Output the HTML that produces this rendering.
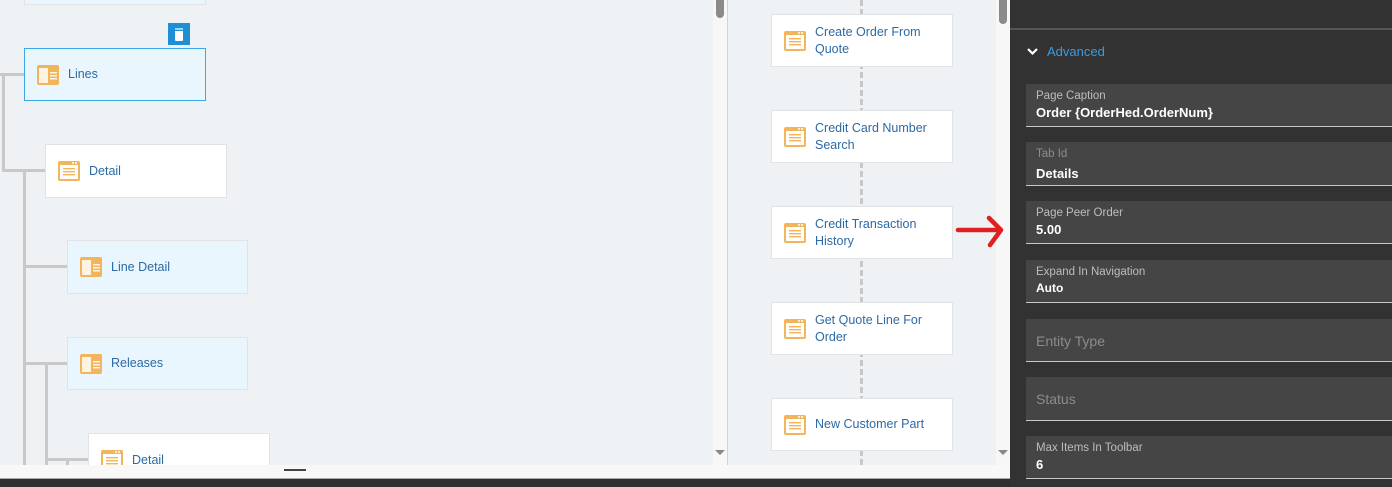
<!DOCTYPE html>
<html><head><style>
*{margin:0;padding:0;box-sizing:border-box}
body{width:1392px;height:487px;overflow:hidden;position:relative;background:#eef2f5;font-family:"Liberation Sans",sans-serif}
.a{position:absolute}
.card{position:absolute;background:#fff;border:1px solid #e1e3e6;display:flex;align-items:center;color:#2c6aa5;font-size:12.5px;line-height:17px}
.card.sel{background:#eaf6fd}
.card svg{position:absolute;left:12px;top:50%;margin-top:-10px}
.card span{position:absolute;left:43px;right:8px}
.ln{position:absolute;background:#c9c9c9}
.fld{position:absolute;left:1026px;width:366px;height:43px;background:#454545;border-bottom:1px solid #c8c8c8}
.lb{position:absolute;left:10px;top:6px;font-size:11.5px;color:#bdbdbd}
.vl{position:absolute;left:10px;top:21px;font-size:13px;color:#fff;font-weight:bold}
.ph{position:absolute;left:10px;top:14px;font-size:14px;color:#8c8c8c}
</style></head><body>
<svg width="0" height="0" style="position:absolute"><defs>
<symbol id="i1" viewBox="0 0 22 20"><rect x="0" y="0" width="22" height="20" rx="2" fill="#f3b55c"/><rect x="2" y="3" width="9" height="15" fill="#fdf3e3"/><rect x="13" y="7" width="7" height="1.5" fill="#fdf3e3"/><rect x="13" y="10" width="7" height="1.5" fill="#fdf3e3"/><rect x="13" y="13" width="7" height="1.5" fill="#fdf3e3"/></symbol>
<symbol id="i2" viewBox="0 0 22 20"><rect x="0" y="0" width="22" height="20" rx="2" fill="#f3b55c"/><rect x="2" y="4" width="18" height="14" fill="#fff"/><rect x="14" y="1.2" width="2" height="1.5" fill="#fff"/><rect x="17" y="1.2" width="2" height="1.5" fill="#fff"/><rect x="5" y="7" width="12" height="1.4" fill="#f3b55c"/><rect x="5" y="10" width="12" height="1.4" fill="#f3b55c"/><rect x="5" y="13" width="12" height="1.4" fill="#f3b55c"/></symbol>
</defs></svg>

<div class="ln" style="left:0;top:73px;width:24px;height:3px"></div>
<div class="ln" style="left:2px;top:73px;width:3px;height:99px"></div>
<div class="ln" style="left:2px;top:169px;width:43px;height:3px"></div>
<div class="ln" style="left:23px;top:169px;width:3px;height:300px"></div>
<div class="ln" style="left:23px;top:265px;width:44px;height:3px"></div>
<div class="ln" style="left:23px;top:362px;width:44px;height:3px"></div>
<div class="ln" style="left:45px;top:362px;width:3px;height:110px"></div>
<div class="ln" style="left:45px;top:458px;width:43px;height:3px"></div>
<div class="ln" style="left:66px;top:458px;width:3px;height:10px"></div>

<div class="card sel" style="left:24px;top:-10px;width:182px;height:15px"></div>
<div class="a" style="left:168px;top:23px;width:22px;height:22px;background:#1e8fd5"><div class="a" style="left:7px;top:5px;width:8px;height:2px;background:#9fd3f5"></div><div class="a" style="left:7px;top:8px;width:8px;height:10px;background:#fff;border-radius:0 0 1px 1px"></div></div>
<div class="card sel" style="left:24px;top:48px;width:182px;height:53px;border-color:#3aa9e8"><svg width="22" height="20"><use href="#i1"/></svg><span>Lines</span></div>
<div class="card" style="left:45px;top:144px;width:182px;height:54px"><svg width="22" height="20"><use href="#i2"/></svg><span>Detail</span></div>
<div class="card sel" style="left:67px;top:240px;width:181px;height:54px"><svg width="22" height="20"><use href="#i1"/></svg><span>Line Detail</span></div>
<div class="card sel" style="left:67px;top:337px;width:181px;height:53px"><svg width="22" height="20"><use href="#i1"/></svg><span>Releases</span></div>
<div class="card" style="left:88px;top:433px;width:182px;height:54px"><svg width="22" height="20"><use href="#i2"/></svg><span>Detail</span></div>

<div class="a" style="left:713px;top:0;width:14px;height:465px;background:#f7f7f7"></div>
<div class="a" style="left:716px;top:0;width:8px;height:18px;background:#8a8a8a;border-radius:0 0 4px 4px"></div>
<div class="a" style="left:715px;top:450px;width:0;height:0;border-left:5px solid transparent;border-right:5px solid transparent;border-top:5px solid #888"></div>
<div class="a" style="left:727px;top:0;width:1px;height:465px;background:#cfd3d6"></div>

<div class="a" style="left:860px;top:0;width:0;height:465px;border-left:3px dashed #c8c8c8"></div>
<div class="card" style="left:771px;top:14px;width:182px;height:53px"><svg width="22" height="20"><use href="#i2"/></svg><span>Create Order From Quote</span></div>
<div class="card" style="left:771px;top:110px;width:182px;height:53px"><svg width="22" height="20"><use href="#i2"/></svg><span>Credit Card Number Search</span></div>
<div class="card" style="left:771px;top:206px;width:182px;height:53px"><svg width="22" height="20"><use href="#i2"/></svg><span>Credit Transaction History</span></div>
<div class="card" style="left:771px;top:302px;width:182px;height:53px"><svg width="22" height="20"><use href="#i2"/></svg><span>Get Quote Line For Order</span></div>
<div class="card" style="left:771px;top:398px;width:182px;height:53px"><svg width="22" height="20"><use href="#i2"/></svg><span>New Customer Part</span></div>
<div class="a" style="left:996px;top:0;width:14px;height:465px;background:#f7f7f7"></div>
<div class="a" style="left:999px;top:0;width:8px;height:24px;background:#8a8a8a;border-radius:0 0 4px 4px"></div>
<div class="a" style="left:998px;top:450px;width:0;height:0;border-left:5px solid transparent;border-right:5px solid transparent;border-top:5px solid #888"></div>

<svg class="a" style="left:955px;top:214px" width="50" height="40"><path d="M3 16 H44 M34 4 L46 16 L35 31" stroke="#e0201e" stroke-width="4.5" fill="none" stroke-linecap="round" stroke-linejoin="round"/></svg>

<div class="a" style="left:0;top:465px;width:1010px;height:13px;background:#f8f8f8"></div>
<div class="a" style="left:284px;top:469px;width:22px;height:2px;background:#444"></div>
<div class="a" style="left:0;top:478px;width:1010px;height:9px;background:#2f2f2f;border-top:1px solid #aaa"></div>

<div class="a" style="left:1010px;top:0;width:382px;height:487px;background:#323232"></div>
<div class="a" style="left:1010px;top:28px;width:382px;height:2px;background:#555"></div>
<svg class="a" style="left:1026px;top:47px" width="14" height="10"><path d="M2 2 L6.5 6.5 L11 2" stroke="#fff" stroke-width="2.2" fill="none"/></svg>
<div class="a" style="left:1047px;top:44px;font-size:13px;color:#3d9be0">Advanced</div>
<div class="fld" style="top:84px;height:43px"><div class="lb">Page Caption</div><div class="vl">Order {OrderHed.OrderNum}</div></div>
<div class="fld" style="top:142px;height:44px"><div class="lb" style="color:#8c8c8c">Tab Id</div><div class="vl" style="top:24px">Details</div></div>
<div class="fld" style="top:201px;height:43px"><div class="lb">Page Peer Order</div><div class="vl">5.00</div></div>
<div class="fld" style="top:260px;height:43px"><div class="lb">Expand In Navigation</div><div class="vl" style="font-size:12px">Auto</div></div>
<div class="fld" style="top:319px;height:43px"><div class="ph">Entity Type</div></div>
<div class="fld" style="top:377px;height:44px"><div class="ph">Status</div></div>
<div class="fld" style="top:436px;height:43px"><div class="lb">Max Items In Toolbar</div><div class="vl">6</div></div>
</body></html>
